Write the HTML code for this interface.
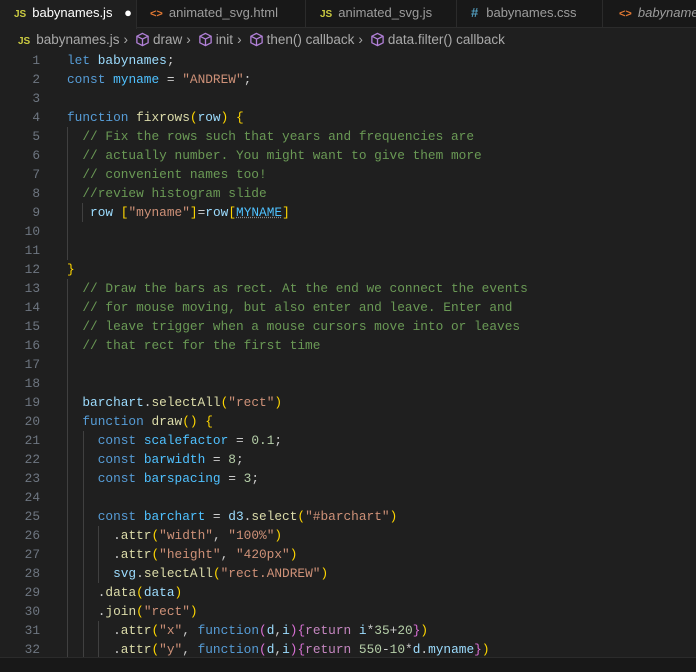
<!DOCTYPE html><html><head><meta charset="utf-8"><style>
body{margin:0;width:696px;height:671px;background:#1f1f1f;overflow:hidden;position:relative;font-family:"Liberation Sans",sans-serif}
.tabs{position:absolute;left:0;top:0;width:696px;height:28px;background:#181818;border-bottom:1px solid #2b2b2b;box-sizing:border-box}
.tab{position:absolute;top:0;height:28px;line-height:26px;font-size:13px;color:#9d9d9d;border-right:1px solid #2b2b2b;box-sizing:border-box;white-space:nowrap;overflow:hidden}
.tab.act{background:#1f1f1f;color:#fff;height:29px}
.js{color:#cbcb41;font-weight:bold;font-size:10px;margin-right:6px}
.ht{color:#e37933;font-weight:bold;font-size:11px;margin-right:6px}
.crumb{position:absolute;top:31px;left:18px;font-size:13.5px;color:#a9a9a9;white-space:nowrap;line-height:18px}
.cube{display:inline-block;vertical-align:-3px;margin:0 3px 0 2px}
.sep{color:#a9a9a9;margin:0 5px 0 4px}
.ln{position:absolute;left:0;width:40px;text-align:right;top:51px;font:12.8px/19px "Liberation Mono",monospace;color:#6e7681;margin:0}
pre{position:absolute;left:67px;top:51px;margin:0;font:12.8px/19px "Liberation Mono",monospace;color:#cccccc}
.k{color:#569cd6}.v{color:#9cdcfe}.c{color:#4fc1ff}.f{color:#dcdcaa}.s{color:#ce9178}.m{color:#6a9955}.n{color:#b5cea8}.y{color:#ffd700}.p{color:#da70d6}.b{color:#179fff}.r{color:#c586c0}
.g{position:absolute;width:1px;background:#404040}
.bottom{position:absolute;left:0;top:657px;width:696px;height:14px;background:#181818;border-top:1px solid #2b2b2b}
</style></head><body>
<div class="tabs">
<div class="tab act" style="left:0;width:137px;padding-left:14px"><span class="js">JS</span>babynames.js <span style="margin-left:8px">●</span></div>
<div class="tab" style="left:137px;width:169px;padding-left:13px"><span class="ht">&lt;&gt;</span>animated_svg.html</div>
<div class="tab" style="left:306px;width:151px;padding-left:14px"><span class="js">JS</span>animated_svg.js</div>
<div class="tab" style="left:457px;width:146px;padding-left:14px"><span style="color:#519aba;font-weight:bold;margin-right:8px">#</span>babynames.css</div>
<div class="tab" style="left:603px;width:93px;padding-left:16px;border-right:0"><span class="ht">&lt;&gt;</span><i>babynames.html</i></div>
</div>
<div class="crumb"><span class="js">JS</span>babynames.js<span class="sep">›</span><svg class="cube" width="15" height="15" viewBox="0 0 16 16" fill="none" stroke="#b180d7" stroke-width="1.4"><path d="M8 1.5L14 4.5V11.5L8 14.5L2 11.5V4.5Z M2 4.5L8 7.5L14 4.5 M8 7.5V14.5"/></svg>draw<span class="sep">›</span><svg class="cube" width="15" height="15" viewBox="0 0 16 16" fill="none" stroke="#b180d7" stroke-width="1.4"><path d="M8 1.5L14 4.5V11.5L8 14.5L2 11.5V4.5Z M2 4.5L8 7.5L14 4.5 M8 7.5V14.5"/></svg>init<span class="sep">›</span><svg class="cube" width="15" height="15" viewBox="0 0 16 16" fill="none" stroke="#b180d7" stroke-width="1.4"><path d="M8 1.5L14 4.5V11.5L8 14.5L2 11.5V4.5Z M2 4.5L8 7.5L14 4.5 M8 7.5V14.5"/></svg>then() callback<span class="sep">›</span><svg class="cube" width="15" height="15" viewBox="0 0 16 16" fill="none" stroke="#b180d7" stroke-width="1.4"><path d="M8 1.5L14 4.5V11.5L8 14.5L2 11.5V4.5Z M2 4.5L8 7.5L14 4.5 M8 7.5V14.5"/></svg>data.filter() callback</div>
<div class="g" style="left:67px;top:127px;height:133px"></div>
<div class="g" style="left:82px;top:203px;height:19px"></div>
<div class="g" style="left:67px;top:279px;height:378px"></div>
<div class="g" style="left:83px;top:431px;height:226px"></div>
<div class="g" style="left:98px;top:526px;height:57px"></div>
<div class="g" style="left:98px;top:621px;height:36px"></div>
<pre class="ln">1
2
3
4
5
6
7
8
9
10
11
12
13
14
15
16
17
18
19
20
21
22
23
24
25
26
27
28
29
30
31
32</pre>
<pre><span class="k">let</span> <span class="v">babynames</span>;
<span class="k">const</span> <span class="c">myname</span> = <span class="s">"ANDREW"</span>;

<span class="k">function</span> <span class="f">fixrows</span><span class="y">(</span><span class="v">row</span><span class="y">)</span> <span class="y">{</span>
  <span class="m">// Fix the rows such that years and frequencies are</span>
  <span class="m">// actually number. You might want to give them more</span>
  <span class="m">// convenient names too!</span>
  <span class="m">//review histogram slide</span>
   <span class="v">row</span> <span class="y">[</span><span class="s">"myname"</span><span class="y">]</span>=<span class="v">row</span><span class="y">[</span><span class="c" style="text-decoration:underline dotted #888">MYNAME</span><span class="y">]</span>


<span class="y">}</span>
  <span class="m">// Draw the bars as rect. At the end we connect the events</span>
  <span class="m">// for mouse moving, but also enter and leave. Enter and</span>
  <span class="m">// leave trigger when a mouse cursors move into or leaves</span>
  <span class="m">// that rect for the first time</span>


  <span class="v">barchart</span>.<span class="f">selectAll</span><span class="y">(</span><span class="s">"rect"</span><span class="y">)</span>
  <span class="k">function</span> <span class="f">draw</span><span class="y">()</span> <span class="y">{</span>
    <span class="k">const</span> <span class="c">scalefactor</span> = <span class="n">0.1</span>;
    <span class="k">const</span> <span class="c">barwidth</span> = <span class="n">8</span>;
    <span class="k">const</span> <span class="c">barspacing</span> = <span class="n">3</span>;

    <span class="k">const</span> <span class="c">barchart</span> = <span class="v">d3</span>.<span class="f">select</span><span class="y">(</span><span class="s">"#barchart"</span><span class="y">)</span>
      .<span class="f">attr</span><span class="y">(</span><span class="s">"width"</span>, <span class="s">"100%"</span><span class="y">)</span>
      .<span class="f">attr</span><span class="y">(</span><span class="s">"height"</span>, <span class="s">"420px"</span><span class="y">)</span>
      <span class="v">svg</span>.<span class="f">selectAll</span><span class="y">(</span><span class="s">"rect.ANDREW"</span><span class="y">)</span>
    .<span class="f">data</span><span class="y">(</span><span class="v">data</span><span class="y">)</span>
    .<span class="f">join</span><span class="y">(</span><span class="s">"rect"</span><span class="y">)</span>
      .<span class="f">attr</span><span class="y">(</span><span class="s">"x"</span>, <span class="k">function</span><span class="p">(</span><span class="v">d</span>,<span class="v">i</span><span class="p">)</span><span class="p">{</span><span class="r">return</span> <span class="v">i</span>*<span class="n">35</span>+<span class="n">20</span><span class="p">}</span><span class="y">)</span>
      .<span class="f">attr</span><span class="y">(</span><span class="s">"y"</span>, <span class="k">function</span><span class="p">(</span><span class="v">d</span>,<span class="v">i</span><span class="p">)</span><span class="p">{</span><span class="r">return</span> <span class="n">550</span>-<span class="n">10</span>*<span class="v">d</span>.<span class="v">myname</span><span class="p">}</span><span class="y">)</span></pre>
<div class="bottom"></div>
</body></html>
